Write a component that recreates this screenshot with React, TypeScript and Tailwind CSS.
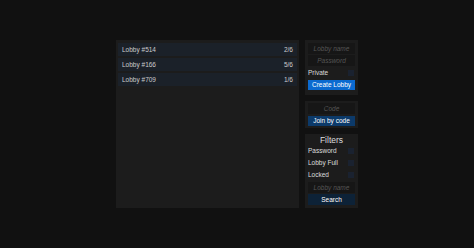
import React from "react";

const lobbies = [
  { name: "Lobby #514", count: "2/6" },
  { name: "Lobby #166", count: "5/6" },
  { name: "Lobby #709", count: "1/6" },
];

const Input = ({ placeholder }: { placeholder: string }) => (
  <div className="h-[11px] shrink-0 bg-[#161616] flex items-center justify-center text-[6.5px] italic text-[#555]">
    {placeholder}
  </div>
);

const Check = ({ label }: { label: string }) => (
  <div className="flex items-center justify-between h-[12px] shrink-0 text-[6.5px] text-[#ddd]">
    <span>{label}</span>
    <span className="w-[6px] h-[6px] bg-[#1a2230] mr-[1px]" />
  </div>
);

export default function App() {
  return (
    <div
      className="w-[474px] h-[248px] bg-[#111111] flex justify-center pt-[40px] gap-[6px]"
      style={{ fontFamily: '"Liberation Sans", Arial, sans-serif' }}
    >
      <div className="w-[183px] h-[168px] bg-[#1c1c1c] px-[2px] pt-[3px] flex flex-col gap-[2px]">
        {lobbies.map((l) => (
          <div
            key={l.name}
            className="h-[13px] bg-[#1b2129] flex items-center justify-between px-[4px] text-[6.5px] text-[#ccc]"
          >
            <span>{l.name}</span>
            <span>{l.count}</span>
          </div>
        ))}
      </div>
      <div className="w-[53px] flex flex-col gap-[6px]">
        <div className="bg-[#1c1c1c] px-[3px] py-[3px] flex flex-col gap-[1px] h-[55px]">
          <Input placeholder="Lobby name" />
          <Input placeholder="Password" />
          <Check label="Private" />
          <div className="h-[10px] bg-[#0b6ad0] flex items-center justify-center text-[6.5px] text-white">
            Create Lobby
          </div>
        </div>
        <div className="bg-[#1c1c1c] px-[3px] py-[2px] flex flex-col gap-[2px] h-[27px]">
          <Input placeholder="Code" />
          <div className="h-[10px] bg-[#0c3a6a] flex items-center justify-center text-[6.5px] text-white">
            Join by code
          </div>
        </div>
        <div className="bg-[#1c1c1c] px-[3px] pt-[1px] pb-[3px] flex flex-col h-[74px]">
          <div className="text-center text-[8.5px] text-[#ddd] h-[10px] leading-[10px] shrink-0">Filters</div>
          <Check label="Password" />
          <Check label="Lobby Full" />
          <Check label="Locked" />
          <div className="mt-[1px]">
            <Input placeholder="Lobby name" />
          </div>
          <div className="mt-[1px] h-[11px] shrink-0 bg-[#0d2237] flex items-center justify-center text-[6.5px] text-white">
            Search
          </div>
        </div>
      </div>
    </div>
  );
}
